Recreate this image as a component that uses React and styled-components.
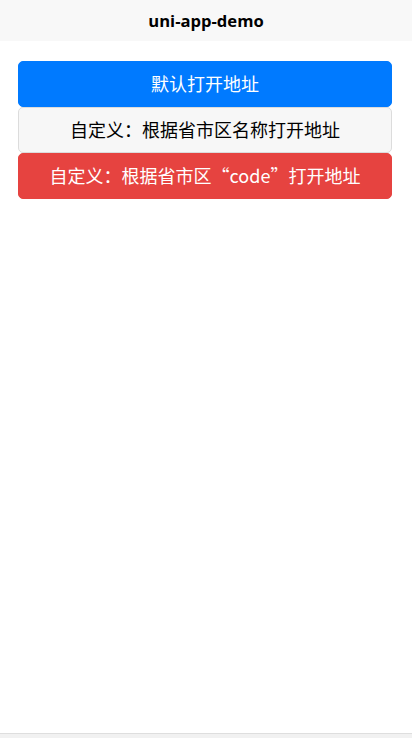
import React from "react";
import styled, { createGlobalStyle } from "styled-components";

const Global = createGlobalStyle`
  html, body { margin: 0; padding: 0; background: #fff; }
  body { font-family: "Noto Sans CJK SC", "Noto Sans", sans-serif; }
  * { box-sizing: border-box; }
`;

const Page = styled.div`
  display: flex;
  flex-direction: column;
  min-height: 733px;
`;

const Header = styled.div`
  height: 41px;
  background: #f8f8f8;
  display: flex;
  align-items: center;
  justify-content: center;
  font-family: "Open Sans", "Noto Sans", sans-serif;
  font-weight: 700;
  font-size: 16.6px;
  color: #000;
`;

const Content = styled.div`
  padding: 20px 20px 0 18px;
  display: flex;
  flex-direction: column;
`;

const colors = {
  primary: { bg: "#007aff", fg: "#fff", border: "#007aff" },
  default: { bg: "#f7f7f7", fg: "#000", border: "#dcdcdc" },
  warn: { bg: "#e64340", fg: "#fff", border: "#e64340" },
};

const Button = styled.button`
  height: 46px;
  margin: 0;
  padding: 0 14px 2px;
  border-radius: 5px;
  border: 1px solid ${(p) => colors[p.$kind].border};
  background: ${(p) => colors[p.$kind].bg};
  color: ${(p) => colors[p.$kind].fg};
  font-family: "Noto Sans CJK SC", "Noto Sans", sans-serif;
  font-size: 18px;
  display: flex;
  align-items: center;
  justify-content: center;
  width: 374px;
`;

const BottomBar = styled.div`
  position: fixed;
  left: 0;
  right: 0;
  bottom: 0;
  height: 5px;
  border-top: 1px solid #dedede;
  background: #f1f1f1;
`;

export default function App() {
  return (
    <>
      <Global />
      <Page>
        <Header>uni-app-demo</Header>
        <Content>
          <Button $kind="primary">默认打开地址</Button>
          <Button $kind="default">自定义：根据省市区名称打开地址</Button>
          <Button $kind="warn">自定义：根据省市区“code”打开地址</Button>
        </Content>
      </Page>
      <BottomBar />
    </>
  );
}
